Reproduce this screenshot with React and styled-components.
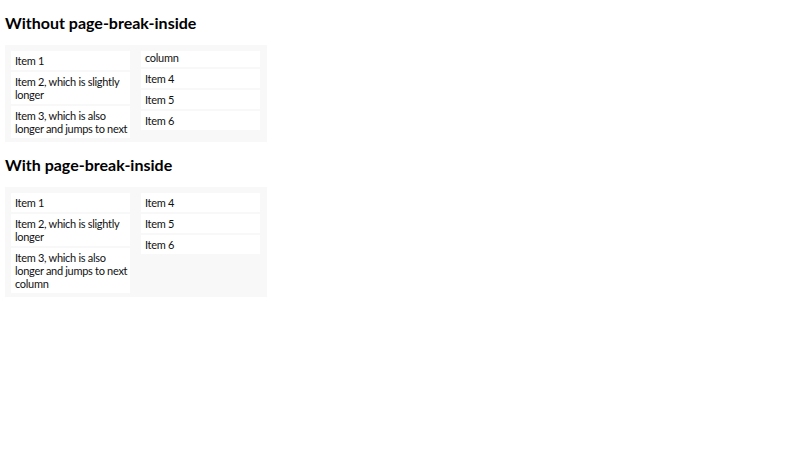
import React from "react";
import styled, { createGlobalStyle } from "styled-components";

const Global = createGlobalStyle`
  html, body { margin: 0; padding: 0; background: #ffffff; }
  body { font-family: Lato, "Noto Sans", sans-serif; color: #111; }
`;

const Page = styled.div`
  padding: 0 5px;
  display: flex;
  flex-direction: column;
  align-items: flex-start;
`;

const Heading = styled.h2`
  margin: 14px 0 13px;
  font-size: 16px;
  line-height: 18px;
  font-weight: 700;
  color: #000;
`;

const Box = styled.div`
  width: 262px;
  box-sizing: border-box;
  background: #f8f8f8;
  padding: 6px 7px 4px 6px;
  display: flex;
  gap: 11px;
  align-items: flex-start;
`;

const Column = styled.div`
  width: 119px;
  display: flex;
  flex-direction: column;
  gap: 2px;
`;

const Item = styled.div`
  background: #ffffff;
  font-size: 11px;
  letter-spacing: -0.3px;
  line-height: 13px;
  white-space: nowrap;
  padding: ${(p) => (p.$cont ? "0" : "3px")} 4px 3px;
`;

export default function App() {
  return (
    <>
      <Global />
      <Page>
        <Heading>Without page-break-inside</Heading>
        <Box>
          <Column>
            <Item>Item 1</Item>
            <Item>Item 2, which is slightly<br />longer</Item>
            <Item>Item 3, which is also<br />longer and jumps to next</Item>
          </Column>
          <Column>
            <Item $cont>column</Item>
            <Item>Item 4</Item>
            <Item>Item 5</Item>
            <Item>Item 6</Item>
          </Column>
        </Box>
        <Heading>With page-break-inside</Heading>
        <Box>
          <Column>
            <Item>Item 1</Item>
            <Item>Item 2, which is slightly<br />longer</Item>
            <Item>Item 3, which is also<br />longer and jumps to next<br />column</Item>
          </Column>
          <Column>
            <Item>Item 4</Item>
            <Item>Item 5</Item>
            <Item>Item 6</Item>
          </Column>
        </Box>
      </Page>
    </>
  );
}
